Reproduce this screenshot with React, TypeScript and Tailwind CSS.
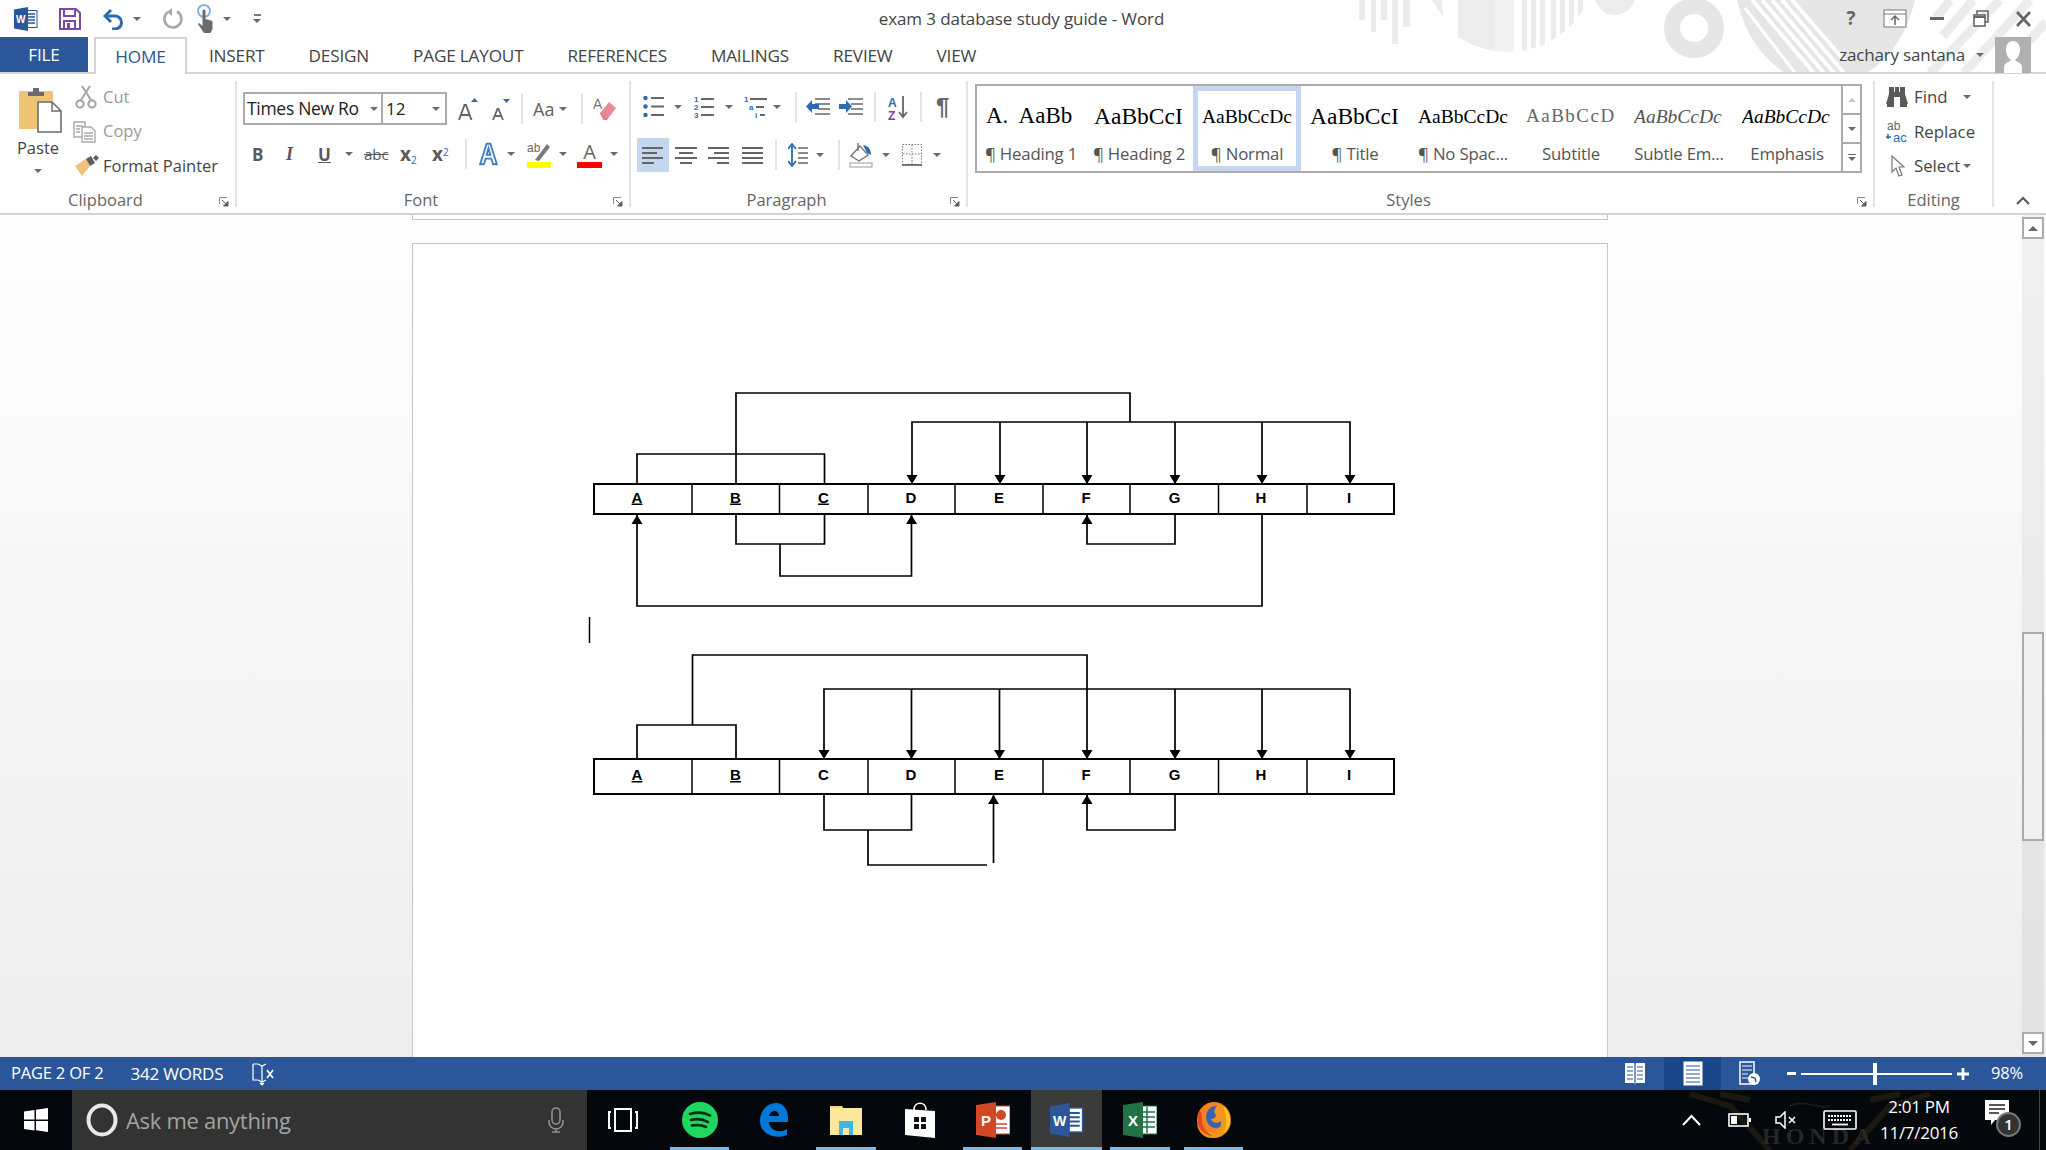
import type { ReactNode } from "react";

const Caret = ({ className = "" }: { className?: string }) => (
  <span className={`flex w-[8px] justify-center shrink-0 ${className}`}>
    <span className="block h-0 w-0 border-x-[4px] border-t-[4px] border-x-transparent border-t-[#6a6a6a]" />
  </span>
);

const Sep = ({ className = "" }: { className?: string }) => (
  <span className={`block h-[30px] w-[2px] shrink-0 bg-[#e3e3e3] ${className}`} />
);

const Launcher = ({ className = "" }: { className?: string }) => (
  <svg width="10" height="10" viewBox="0 0 10 10" className={className}>
    <path d="M.5 7V.5H8" fill="none" stroke="#8a8a8a" />
    <path d="M3 3l5 5M9 4.5V9H4.5z" fill="#5f5f5f" stroke="#5f5f5f" />
  </svg>
);

function Group({ className, label, launcher = true, children }: { className: string; label: string; launcher?: boolean; children: ReactNode }) {
  return (
    <div className={`flex h-[126px] shrink-0 flex-col border-r-2 border-[#e3e3e3] ${className}`}>
      <div className="h-[109px]">{children}</div>
      <div className={`relative flex h-[17px] justify-center text-[16.5px] leading-[20px] text-[#666] ${launcher ? "pr-[24px]" : ""}`}>
        {label}
        {launcher && <Launcher className="absolute right-[6px] top-[7px]" />}
      </div>
    </div>
  );
}

const WordGlyph = ({ size = 24 }: { size?: number }) => (
  <svg width={size} height={size} viewBox="0 0 24 24">
    <rect x="10" y="3.5" width="13" height="17" fill="#fff" stroke="#2b579a" />
    <path d="M12 7h9M12 10h9M12 13h9M12 16h9" stroke="#2b579a" strokeWidth="1.4" />
    <path d="M0 2.5 14 0v24L0 21.5z" fill="#2b579a" />
    <text x="6.8" y="16" fontSize="10" fontWeight="700" fill="#fff" textAnchor="middle" fontFamily="Liberation Sans">W</text>
  </svg>
);

function TitleArt() {
  return (
    <svg className="absolute left-0 top-0" width="2046" height="73" viewBox="0 0 2046 73">
      <defs>
        <clipPath id="blob"><circle cx="1508" cy="-36" r="88" /></clipPath>
      </defs>
      <g fill="#ececec">
        <rect x="1359" y="0" width="6" height="20" />
        <rect x="1371" y="0" width="5" height="32" />
        <rect x="1381" y="0" width="6" height="20" />
        <rect x="1392" y="0" width="6" height="44" />
        <rect x="1403" y="0" width="7" height="27" />
        <path d="M1432 0h10l1 17z" />
        <g clipPath="url(#blob)">
          <rect x="1458" y="0" width="38" height="60" />
          <rect x="1494" y="0" width="20" height="60" fill="#f2f2f2" />
          <rect x="1522" y="0" width="5" height="60" />
          <rect x="1531" y="0" width="5" height="60" />
          <rect x="1540" y="0" width="5" height="60" />
          <rect x="1551" y="0" width="5" height="60" />
          <rect x="1560" y="0" width="5" height="60" />
          <rect x="1569" y="0" width="5" height="60" />
          <rect x="1578" y="0" width="5" height="60" />
        </g>
        <circle cx="1615" cy="-5" r="20" />
        <ellipse cx="1826" cy="-30" rx="92" ry="115" fill="#e6e6e6" />
      </g>
      <circle cx="1694" cy="28" r="22" fill="none" stroke="#e6e6e6" strokeWidth="16" />
      <g stroke="#fff" strokeWidth="4">
        <path d="M1752 0l62 73M1762 0l62 73M1772 0l62 73M1782 0l62 73M1792 0l52 60" />
        <path d="M1745 8l50 65" strokeWidth="3" />
      </g>
      <g stroke="#ececec" strokeWidth="9">
        <path d="M1950 0l-14 18M1973 0l-30 36M2000 0l-70 73M2030 0l-66 73M2046 22l-46 51" />
      </g>
    </svg>
  );
}

function TitleBar() {
  return (
    <div className="relative z-10 flex h-[37px] items-center">
      <span className="ml-[14px] w-[24px]"><WordGlyph /></span>
      <svg className="ml-[21px]" width="22" height="22" viewBox="0 0 22 22">
        <path d="M1 1h16l4 4v16H1z" fill="#fff" stroke="#7b4aa6" strokeWidth="2" />
        <path d="M5 1v7h11V1M5 21v-8h11v8" fill="none" stroke="#7b4aa6" strokeWidth="2" />
        <rect x="8" y="15" width="3" height="5" fill="#7b4aa6" />
      </svg>
      <svg className="ml-[22px]" width="21" height="22" viewBox="0 0 21 22">
        <path d="M8 2 2 8l6 6" fill="none" stroke="#2b6cb0" strokeWidth="3" />
        <path d="M3 8h9a6.5 6.5 0 0 1 0 13H9" fill="none" stroke="#2b6cb0" strokeWidth="3" />
      </svg>
      <Caret className="ml-[9px]" />
      <svg className="ml-[21px]" width="22" height="22" viewBox="0 0 22 22">
        <path d="M15 3.5A8.5 8.5 0 1 1 6 4" fill="none" stroke="#a8a8a8" strokeWidth="2.6" />
        <path d="M10 0v8L5 4z" fill="#a8a8a8" />
      </svg>
      <svg className="ml-[13px]" width="19" height="30" viewBox="0 0 19 30">
        <circle cx="7" cy="7" r="6" fill="none" stroke="#7fb2de" strokeWidth="2" />
        <path d="M5.5 7a1.5 1.5 0 0 1 3 0v8l7 2v8l-2 4H7l-6-9 1-1 3.5 3z" fill="#6b6b6b" />
      </svg>
      <Caret className="ml-[7px]" />
      <span className="ml-[20px] flex w-[12px] flex-col items-center gap-[3px]">
        <span className="h-[2px] w-[7px] bg-[#7a7a7a]" />
        <Caret />
      </span>
      <span className="absolute left-[878px] w-[287px] whitespace-nowrap text-center text-[17px] tracking-[-0.1px] text-[#444]">exam 3 database study guide - Word</span>
      <div className="ml-auto flex items-center">
        <span className="w-[14px] text-center text-[19px] font-bold leading-none text-[#666]">?</span>
        <svg className="ml-[25px]" width="24" height="19" viewBox="0 0 24 19">
          <rect x="1" y="1" width="22" height="17" fill="#fff" stroke="#777" />
          <path d="M1 5h22" stroke="#777" />
          <path d="M12 16V8M8 11l4-4 4 4" fill="none" stroke="#666" strokeWidth="1.5" />
        </svg>
        <span className="ml-[23px] h-[3px] w-[14px] bg-[#666]" />
        <svg className="ml-[29px]" width="16" height="17" viewBox="0 0 16 17">
          <path d="M4 4V1h11v11h-3" fill="none" stroke="#666" strokeWidth="1.6" />
          <rect x="1" y="5" width="11" height="11" fill="#fff" stroke="#666" strokeWidth="1.6" />
          <path d="M1 7h11" stroke="#666" strokeWidth="2" />
        </svg>
        <svg className="ml-[27px] mr-[15px]" width="15" height="16" viewBox="0 0 15 16">
          <path d="M1 1l13 14M14 1 1 15" stroke="#666" strokeWidth="2.6" />
        </svg>
      </div>
    </div>
  );
}

function Tabs() {
  const tabs = ["INSERT", "DESIGN", "PAGE LAYOUT", "REFERENCES", "MAILINGS", "REVIEW", "VIEW"];
  return (
    <div className="relative z-10 flex h-[37px] items-stretch border-b-2 border-[#d4d4d4] pt-[2px] text-[17.2px] tracking-[-0.2px] text-[#444]">
      <div className="-mt-[2px] flex w-[88px] items-center justify-center bg-[#2b579a] text-white">FILE</div>
      <div className="relative z-10 ml-[6px] -mb-[2px] -mt-[2px] flex w-[93px] items-center justify-center border-x-2 border-t-2 border-[#d4d4d4] bg-white text-[#2b579a]">HOME</div>
      {tabs.map((t) => (
        <div key={t} className="flex items-center whitespace-nowrap px-[22px]">{t}</div>
      ))}
      <div className="-mt-[2px] ml-auto flex items-center text-[17px] tracking-[-0.2px] normal-case">
        <span>zachary santana</span>
        <Caret className="ml-[11px]" />
        <svg className="ml-[11px] mr-[15px]" width="36" height="36" viewBox="0 0 36 36">
          <rect width="36" height="36" fill="#b0b0b0" />
          <path d="M9 36v-6c0-4 5-5 7-7-3-2-5-6-5-10 0-6 3-9 7-9s7 3 7 9c0 4-2 8-5 10 2 2 7 3 7 7v6z" fill="#fff" />
        </svg>
      </div>
    </div>
  );
}

function Clipboard() {
  return (
    <Group className="w-[237px]" label="Clipboard">
      <div className="flex">
        <div className="flex w-[73px] flex-col items-center pl-[3px] pt-[6px]">
          <svg className="ml-[4px]" width="44" height="46" viewBox="0 0 44 46">
            <rect x="1" y="4" width="34" height="38" rx="1" fill="#f0c477" />
            <path d="M10 5h16v4H10zM15 1h6v5h-6z" fill="#6b6b6b" />
            <path d="M20 15h14l9 9v21H20z" fill="#fff" stroke="#6b6b6b" strokeWidth="1.6" />
            <path d="M34 15v9h9" fill="none" stroke="#6b6b6b" strokeWidth="1.4" />
          </svg>
          <span className="mt-[5px] text-[16.5px] leading-[20px] text-[#444]">Paste</span>
          <Caret className="mt-[11px]" />
        </div>
        <div className="-mt-[2px] flex flex-col text-[16.5px] text-[#444]">
          <div className="flex h-[34px] items-center pt-[2px] text-[#9a9a9a]">
            <svg className="ml-[2px]" width="22" height="24" viewBox="0 0 22 24">
              <g fill="none" stroke="#a9a9a9" strokeWidth="2.2">
                <circle cx="5" cy="19" r="3.6" />
                <circle cx="17" cy="19" r="3.6" />
                <path d="M6 15 15 1M16 15 7 1" />
              </g>
            </svg>
            <span className="ml-[6px]">Cut</span>
          </div>
          <div className="flex h-[35px] items-center pt-[2px] text-[#9a9a9a]">
            <svg width="24" height="22" viewBox="0 0 24 22">
              <g fill="#fff" stroke="#a9a9a9" strokeWidth="1.4">
                <path d="M1 1h11v15H1z" />
                <path d="M9 6h9l4 4v11H9z" />
                <path d="M3 5h7M3 8h4M3 11h4M11 12h9M11 15h9M11 18h9" />
              </g>
            </svg>
            <span className="ml-[6px]">Copy</span>
          </div>
          <div className="flex h-[34px] items-center pt-[2px]">
            <svg width="26" height="22" viewBox="0 0 26 22">
              <path d="M2 11 13 4l4 7-8 10z" fill="#eec27a" />
              <path d="M13 4l4 7 5-3-4-7z" fill="#5e5e5e" />
              <path d="M20 3l3-3 3 3-3 3z" fill="#5e5e5e" />
            </svg>
            <span className="ml-[4px] whitespace-nowrap">Format Painter</span>
          </div>
        </div>
      </div>
    </Group>
  );
}

const Lines = ({ kind }: { kind: "left" | "center" | "right" | "justify" }) => {
  const rows: Record<string, string> = {
    left: "M0 2h21M0 7h15M0 12h21M0 17h12",
    center: "M0 2h22M4 7h14M0 12h22M5 17h12",
    right: "M0 2h21M6 7h15M0 12h21M9 17h12",
    justify: "M0 2h21M0 7h21M0 12h21M0 17h21",
  };
  return (
    <svg width="22" height="19" viewBox="0 0 22 19">
      <path d={rows[kind]} stroke="#666" strokeWidth="1.8" />
    </svg>
  );
};

function Font() {
  return (
    <Group className="w-[394px]" label="Font">
      <div className="flex h-[33px] mt-[11px] ml-[6px] items-center">
        <div className="flex h-[33px] w-[140px] shrink-0 items-center border-2 border-[#ababab] bg-white pl-[2px] text-[17.5px] tracking-[-0.3px] text-[#222]">
          <span className="w-[123px] whitespace-nowrap">Times New Ro</span>
          <Caret />
        </div>
        <div className="-ml-[2px] flex h-[33px] w-[66px] shrink-0 items-center border-2 border-[#ababab] bg-white pl-[3px] text-[17px] text-[#222]">
          <span className="w-[46px]">12</span>
          <Caret />
        </div>
        <svg className="ml-[11px]" width="21" height="26" viewBox="0 0 21 26">
          <path d="M1 24 6.5 9H8l5.5 15M3.5 19h8" fill="none" stroke="#666" strokeWidth="1.9" />
          <path d="M13 6l3.5-4L20 6z" fill="#2b6cb0" />
        </svg>
        <svg className="ml-[12px]" width="20" height="26" viewBox="0 0 20 26">
          <path d="M2 24 6.5 13h1L12 24M4 20h6" fill="none" stroke="#666" strokeWidth="1.8" />
          <path d="M12 3l3.5 4L19 3z" fill="#2b6cb0" />
        </svg>
        <Sep className="ml-[10px]" />
        <span className="ml-[10px] whitespace-nowrap text-[18px] leading-[26px] text-[#5e5e5e]">Aa</span>
        <Caret className="ml-[5px]" />
        <Sep className="ml-[14px]" />
        <svg className="ml-[10px]" width="24" height="28" viewBox="0 0 24 28">
          <text x="0" y="14" fontSize="14" fill="#777" fontFamily="Liberation Sans">A</text>
          <path d="M7 18 16 7l7 6-9 12H10z" fill="#e98a99" />
          <path d="M7 18l7 7" stroke="#d66" />
        </svg>
      </div>
      <div className="mt-[12px] ml-[6px] flex h-[34px] items-center text-[#5a5a5a]">
        <span className="ml-[9px] w-[13px] text-[17px] font-bold leading-none">B</span>
        <span className="ml-[21px] w-[11px] font-['Liberation_Serif',serif] text-[18px] font-bold italic leading-none">I</span>
        <span className="ml-[21px] w-[14px] text-[17px] font-bold leading-none underline">U</span>
        <Caret className="ml-[13px]" />
        <span className="ml-[11px] w-[25px] text-[15px] leading-[20px] line-through">abc</span>
        <span className="ml-[11px] w-[21px] whitespace-nowrap text-[19px] font-bold leading-[24px]">x<sub className="text-[10px] text-[#2b6cb0] font-normal">2</sub></span>
        <span className="ml-[11px] w-[23px] whitespace-nowrap text-[19px] font-bold leading-[24px]">x<sup className="text-[10px] text-[#2b6cb0] font-normal">2</sup></span>
        <Sep className="ml-[10px]" />
        <svg className="ml-[11px]" width="21" height="26" viewBox="0 0 22 28">
          <path d="M2 25 9 3h4l7 22h-4l-2-6H8l-2 6zM9 15h4l-2-7z" fill="#fff" stroke="#3f7fc0" strokeWidth="2" />
        </svg>
        <Caret className="ml-[8px]" />
        <svg className="ml-[12px]" width="24" height="28" viewBox="0 0 24 28">
          <text x="0" y="12" fontSize="12" fill="#666" fontFamily="Liberation Sans">ab</text>
          <path d="M8 20 20 4l3 3-11 14z" fill="#777" />
          <rect x="0" y="22" width="24" height="6" fill="#ffff00" />
        </svg>
        <Caret className="ml-[8px]" />
        <span className="ml-[10px] flex w-[25px] flex-col items-center">
          <span className="text-[20px] leading-[21px] text-[#666]">A</span>
          <span className="h-[6px] w-[25px] bg-[#f00]" />
        </span>
        <Caret className="ml-[8px]" />
      </div>
    </Group>
  );
}

const ListLines = () => <path d="M8 3h13M8 11.5h13M8 20h13" stroke="#666" strokeWidth="1.8" />;

function Paragraph() {
  return (
    <Group className="w-[337px]" label="Paragraph">
      <div className="mt-[9px] flex h-[34px] items-center">
        <svg className="ml-[12px]" width="22" height="24" viewBox="0 0 22 24">
          <circle cx="2.5" cy="3" r="2.2" fill="#2b6cb0" />
          <circle cx="2.5" cy="11.5" r="2.2" fill="#2b6cb0" />
          <circle cx="2.5" cy="20" r="2.2" fill="#2b6cb0" />
          <ListLines />
        </svg>
        <Caret className="ml-[9px]" />
        <svg className="ml-[11px]" width="22" height="28" viewBox="0 0 22 28">
          <text x="1" y="9" fontSize="8" fontWeight="700" fill="#2b6cb0" fontFamily="Liberation Sans">1</text>
          <text x="1" y="17" fontSize="8" fontWeight="700" fill="#2b6cb0" fontFamily="Liberation Sans">2</text>
          <text x="1" y="25" fontSize="8" fontWeight="700" fill="#2b6cb0" fontFamily="Liberation Sans">3</text>
          <path d="M8 6h13M8 14h13M8 22h13" stroke="#666" strokeWidth="1.8" />
        </svg>
        <Caret className="ml-[10px]" />
        <svg className="ml-[10px]" width="24" height="28" viewBox="0 0 24 28">
          <text x="1" y="9" fontSize="8" fontWeight="700" fill="#2b6cb0" fontFamily="Liberation Sans">1</text>
          <text x="6" y="17" fontSize="8" fontWeight="700" fill="#2b6cb0" fontFamily="Liberation Sans">a</text>
          <text x="12" y="25" fontSize="8" fontWeight="700" fill="#2b6cb0" fontFamily="Liberation Sans">i</text>
          <path d="M7 6h17M13 14h8M17 22h5" stroke="#666" strokeWidth="1.8" />
        </svg>
        <Caret className="ml-[6px]" />
        <Sep className="ml-[14px]" />
        <svg className="ml-[9px]" width="24" height="20" viewBox="0 0 24 20">
          <path d="M9 2h15M9 7h15M12 12h12M9 17h15" stroke="#666" strokeWidth="1.7" />
          <path d="M0 9.5 6 3v4h7v5H6v4z" fill="#2b6cb0" />
        </svg>
        <svg className="ml-[9px]" width="24" height="20" viewBox="0 0 24 20">
          <path d="M9 2h15M12 7h12M12 12h12M9 17h15" stroke="#666" strokeWidth="1.7" />
          <path d="M13 9.5 7 3v4H0v5h7v4z" fill="#2b6cb0" />
        </svg>
        <Sep className="ml-[11px]" />
        <svg className="ml-[12px]" width="20" height="27" viewBox="0 0 20 27">
          <text x="0" y="13" fontSize="12" fontWeight="700" fill="#2b6cb0" fontFamily="Liberation Sans">A</text>
          <text x="0" y="26" fontSize="12" fontWeight="700" fill="#7b3fa8" fontFamily="Liberation Sans">Z</text>
          <path d="M15 2v21M11 18l4 5 4-5" fill="none" stroke="#666" strokeWidth="1.8" />
        </svg>
        <Sep className="ml-[12px]" />
        <span className="ml-[14px] w-[16px] font-['Liberation_Sans',sans-serif] text-[24px] font-bold leading-[28px] text-[#666]">¶</span>
      </div>
      <div className="mt-[14px] flex h-[34px] items-center">
        <span className="ml-[6px] flex h-[34px] w-[32px] items-center justify-center bg-[#c5d7f0]"><Lines kind="left" /></span>
        <span className="ml-[6px] w-[22px]"><Lines kind="center" /></span>
        <span className="ml-[11px] w-[21px]"><Lines kind="right" /></span>
        <span className="ml-[13px] w-[21px]"><Lines kind="justify" /></span>
        <Sep className="ml-[12px]" />
        <svg className="ml-[11px]" width="20" height="24" viewBox="0 0 20 24">
          <path d="M4 3v18M0 6l4-5 4 5M0 18l4 5 4-5" fill="none" stroke="#2b6cb0" strokeWidth="1.8" />
          <path d="M10 5h10M10 10h10M10 15h10M10 20h10" stroke="#666" strokeWidth="1.7" />
        </svg>
        <Caret className="ml-[8px]" />
        <Sep className="ml-[14px]" />
        <svg className="ml-[9px]" width="24" height="26" viewBox="0 0 24 26">
          <path d="M2 14 11 4l8 9-9 6z" fill="#fff" stroke="#777" strokeWidth="1.4" />
          <path d="M9 1v8" stroke="#777" strokeWidth="1.4" />
          <path d="M14 3c6 1 8 5 8 10l-4-2z" fill="#2b6cb0" />
          <rect x="1" y="21" width="22" height="4" fill="#fff" stroke="#999" />
        </svg>
        <Caret className="ml-[9px]" />
        <svg className="ml-[12px]" width="20" height="22" viewBox="0 0 20 22">
          <rect x=".5" y=".5" width="19" height="20" fill="none" stroke="#777" strokeDasharray="1.5 1.5" />
          <path d="M10 1v19M1 10h18" stroke="#777" strokeDasharray="1.5 1.5" />
          <path d="M0 21h20" stroke="#555" strokeWidth="1.5" />
        </svg>
        <Caret className="ml-[11px]" />
      </div>
    </Group>
  );
}

const styleItems: { label: string; sample: string; cls: string; active?: boolean }[] = [
  { label: "¶ Heading 1", sample: "A.  AaBb", cls: "text-[23px] text-black" },
  { label: "¶ Heading 2", sample: "AaBbCcI", cls: "text-[23.5px] text-black" },
  { label: "¶ Normal", sample: "AaBbCcDc", cls: "text-[19.5px] text-black", active: true },
  { label: "¶ Title", sample: "AaBbCcI", cls: "text-[23.5px] text-black" },
  { label: "¶ No Spac...", sample: "AaBbCcDc", cls: "text-[19.5px] text-black" },
  { label: "Subtitle", sample: "AaBbCcD", cls: "text-[19px] tracking-[1.5px] text-[#666]" },
  { label: "Subtle Em...", sample: "AaBbCcDc", cls: "text-[19.5px] italic text-[#555]" },
  { label: "Emphasis", sample: "AaBbCcDc", cls: "text-[19.5px] italic text-black" },
];

function Styles() {
  return (
    <Group className="w-[907px]" label="Styles">
      <div className="ml-[7px] mt-[3px] flex h-[89px] w-[887px] border-2 border-[#ababab]">
        <div className="flex flex-1 overflow-hidden">
          {styleItems.map((s) => (
            <div key={s.label} className={`flex h-[85px] w-[108px] shrink-0 flex-col items-center border-[5px] ${s.active ? "border-[#c5d7f0]" : "border-transparent"}`}>
              <div className={`flex h-[52px] w-[90px] items-center overflow-hidden whitespace-pre font-['Liberation_Serif',serif] ${s.cls}`}>{s.sample}</div>
              <div className="flex h-[24px] items-center whitespace-nowrap text-[16.8px] tracking-[-0.2px] text-[#555]">{s.label}</div>
            </div>
          ))}
        </div>
        <div className="flex w-[19px] flex-col border-l-2 border-[#ababab]">
          <div className="flex h-[29px] items-center justify-center border-b-2 border-[#ababab]">
            <span className="h-0 w-0 border-x-[4px] border-b-[4px] border-x-transparent border-b-[#c4c4c4]" />
          </div>
          <div className="flex h-[29px] items-center justify-center border-b-2 border-[#ababab]"><Caret /></div>
          <div className="flex flex-1 flex-col items-center justify-center gap-[2px]">
            <span className="h-[1.5px] w-[8px] bg-[#6a6a6a]" />
            <Caret />
          </div>
        </div>
      </div>
    </Group>
  );
}

function Editing() {
  return (
    <Group className="w-[119px] border-r-0" label="Editing" launcher={false}>
      <div className="-mt-[2px] flex flex-col text-[16.8px] text-[#444]">
        <div className="flex h-[34px] items-center pt-[2px]">
          <svg className="ml-[10px]" width="24" height="22" viewBox="0 0 22 22">
            <path d="M3 1h5v5h1V1h4v5h1V1h5v7l3 10H14v-7H8v7H0l3-10z" fill="#5a5a5a" />
            <rect x="1" y="16" width="7" height="5" fill="#5a5a5a" />
            <rect x="14" y="16" width="7" height="5" fill="#5a5a5a" />
          </svg>
          <span className="ml-[5px]">Find</span>
          <Caret className="ml-[16px]" />
        </div>
        <div className="flex h-[35px] items-center pt-[2px]">
          <svg className="ml-[10px]" width="24" height="24" viewBox="0 0 24 24">
            <text x="2" y="10" fontSize="12" fill="#666" fontFamily="Liberation Sans">ab</text>
            <text x="8" y="22" fontSize="13" fill="#2b6cb0" fontFamily="Liberation Sans">ac</text>
            <path d="M1 17h5M3 14v5" stroke="#2b6cb0" strokeWidth="1.5" />
          </svg>
          <span className="ml-[5px]">Replace</span>
        </div>
        <div className="flex h-[34px] items-center pt-[2px]">
          <svg className="ml-[16px]" width="14" height="22" viewBox="0 0 14 22">
            <path d="M1 1v16l4-4 3 8 3-1-3-8h5z" fill="#fff" stroke="#777" strokeWidth="1.2" />
          </svg>
          <span className="ml-[9px]">Select</span>
          <Caret className="ml-[3px]" />
        </div>
      </div>
    </Group>
  );
}

function Ribbon() {
  return (
    <div className="flex h-[141px] items-start border-b-2 border-[#d4d4d4] bg-white pt-[7px]">
      <Clipboard />
      <Font />
      <Paragraph />
      <Styles />
      <Editing />
      <svg className="ml-[22px] mt-[115px]" width="14" height="9" viewBox="0 0 14 9">
        <path d="M1 8l6-6 6 6" fill="none" stroke="#555" strokeWidth="2" />
      </svg>
    </div>
  );
}

type Cell = { label: string; x: number };

const cols: Cell[] = [
  { label: "A", x: 637 },
  { label: "B", x: 735.5 },
  { label: "C", x: 823.5 },
  { label: "D", x: 911 },
  { label: "E", x: 999 },
  { label: "F", x: 1086 },
  { label: "G", x: 1174.5 },
  { label: "H", x: 1261 },
  { label: "I", x: 1349 },
];
const dividers = [692, 779.5, 868, 955, 1043, 1130, 1218.5, 1307];

const Down = ({ x, y }: { x: number; y: number }) => <polygon points={`${x - 5.5},${y - 9} ${x + 5.5},${y - 9} ${x},${y}`} fill="#000" />;
const Up = ({ x, y }: { x: number; y: number }) => <polygon points={`${x - 5.5},${y + 9} ${x + 5.5},${y + 9} ${x},${y}`} fill="#000" />;

function Row({ top, bottom, underlined }: { top: number; bottom: number; underlined: string }) {
  return (
    <g>
      <rect x="594" y={top} width="800" height={bottom - top} fill="#fff" stroke="#000" strokeWidth="2" />
      {dividers.map((d) => (
        <path key={d} d={`M${d} ${top}V${bottom}`} stroke="#000" strokeWidth="1.5" />
      ))}
      {cols.map((c) => (
        <text key={c.label} x={c.x} y={(top + bottom) / 2 + 3.5} textAnchor="middle" fontSize="15" fontWeight="700" fontFamily="Liberation Sans" fill="#000" textDecoration={underlined.includes(c.label) ? "underline" : "none"}>
          {c.label}
        </text>
      ))}
    </g>
  );
}

function Diagram() {
  const stroke = { fill: "none", stroke: "#000", strokeWidth: 1.7 };
  return (
    <svg width="1194" height="813" viewBox="413 244 1194 813">
      <path {...stroke} d="M736 484V393H1130V422M912 484V422H1350V484M1000 484V422M1087 484V422M1175 484V422M1262 484V422" />
      <path {...stroke} d="M637 484V454H824.5V484" />
      <path {...stroke} d="M736 514V544H824.5V514M780 544V576H911.5V514" />
      <path {...stroke} d="M1175 514V544H1087V514" />
      <path {...stroke} d="M1262 514V606H637V514" />
      {[912, 1000, 1087, 1175, 1262, 1350].map((x) => (
        <Down key={x} x={x} y={484} />
      ))}
      <Row top={484} bottom={514} underlined="ABC" />
      {[637, 911.5, 1087].map((x) => (
        <Up key={x} x={x} y={515} />
      ))}
      <path d="M589.5 617V643" stroke="#000" strokeWidth="1.5" />

      <path {...stroke} d="M692.5 725V655H1087V759M824 759V689H1350V759M911.5 759V689M999.5 759V689M1175 759V689M1262 759V689" />
      <path {...stroke} d="M637 759V725H736V759" />
      <path {...stroke} d="M824 794V830H911.5V794M868 830V865H987" />
      <path {...stroke} d="M993.5 863V794" />
      <path {...stroke} d="M1175 794V830H1087V794" />
      <Row top={759} bottom={794} underlined="AB" />
      {[824, 911.5, 999.5, 1087, 1175, 1262, 1350].map((x) => (
        <Down key={x} x={x} y={759} />
      ))}
      {[993.5, 1087].map((x) => (
        <Up key={x} x={x} y={795} />
      ))}
    </svg>
  );
}

function Scrollbar() {
  return (
    <div className="mr-[2px] flex w-[22px] flex-col bg-gradient-to-b from-[#f1f1f1] to-[#e2e2e2] pt-[2px] pb-[3px]">
      <div className="flex h-[22px] items-center justify-center border-2 border-[#ababab] bg-white">
        <span className="h-0 w-0 border-x-[5px] border-b-[5px] border-x-transparent border-b-[#666]" />
      </div>
      <div className="mt-[393px] h-[209px] border-2 border-[#ababab] bg-[#f0f0f0]" />
      <div className="mt-auto flex h-[22px] items-center justify-center border-2 border-[#ababab] bg-white">
        <span className="h-0 w-0 border-x-[5px] border-t-[5px] border-x-transparent border-t-[#666]" />
      </div>
    </div>
  );
}

function Document() {
  return (
    <div className="flex h-[842px] bg-gradient-to-b from-[#fefefe] to-[#eeeeee]">
      <div className="mr-[2px] flex flex-1 flex-col items-center overflow-hidden">
        <div className="h-[5px] w-[1196px] shrink-0 border-x border-b border-[#c6c6c6] bg-white" />
        <div className="mt-[23px] h-[814px] w-[1196px] shrink-0 border-x border-t border-[#c6c6c6] bg-white">
          <Diagram />
        </div>
      </div>
      <Scrollbar />
    </div>
  );
}

function StatusBar() {
  return (
    <div className="flex h-[33px] items-center bg-[#2b579a] text-[16.5px] tracking-[-0.2px] text-white">
      <span className="ml-[11px]">PAGE 2 OF 2</span>
      <span className="ml-[27px] text-[17px]">342 WORDS</span>
      <svg className="ml-[29px]" width="22" height="24" viewBox="0 0 22 24">
        <path d="M1 2h5l4 2 4-2M1 2v16h5l4 2 4-2M10 4v19M8 21l2 2 2-2" fill="none" stroke="#fff" strokeWidth="1.2" />
        <path d="M15 8l6 8M21 8l-6 8" stroke="#fff" strokeWidth="1.6" />
      </svg>
      <div className="ml-auto flex h-full items-center">
        <svg width="22" height="26" viewBox="0 0 22 26">
          <path d="M1 2h9l1 1 1-1h9v20h-9l-1 2-1-2H1z" fill="#fff" />
          <path d="M11 2v22M3 6h6M3 10h6M3 14h6M3 18h6M13 6h6M13 10h6M13 14h6M13 18h6" stroke="#2b579a" strokeWidth="1.2" />
        </svg>
        <div className="ml-[18px] flex h-full w-[57px] items-center justify-center bg-[#19478a]">
          <svg width="20" height="25" viewBox="0 0 20 25">
            <rect x=".5" y=".5" width="19" height="24" fill="#fff" />
            <path d="M3 5h14M3 9h14M3 13h14M3 17h14M3 21h14" stroke="#2b579a" strokeWidth="1.2" />
          </svg>
        </div>
        <svg className="ml-[18px]" width="22" height="26" viewBox="0 0 22 26">
          <path d="M1 1h14v22H1z" fill="#2b579a" stroke="#fff" strokeWidth="1.5" />
          <path d="M3 5h10M3 9h10M3 13h6M3 17h6" stroke="#fff" strokeWidth="1.2" />
          <circle cx="15" cy="18" r="6" fill="#fff" />
          <path d="M12 16l4 1 1 4" fill="none" stroke="#2b579a" strokeWidth="1.5" />
        </svg>
        <span className="ml-[26px] h-[3px] w-[9px] bg-white" />
        <div className="relative ml-[5px] h-[2px] w-[151px] bg-white">
          <span className="absolute left-[72px] top-[-10px] h-[22px] w-[4px] bg-white" />
        </div>
        <svg className="ml-[5px]" width="12" height="14" viewBox="0 0 12 14">
          <path d="M0 7h12M6 1v12" stroke="#fff" strokeWidth="2.8" />
        </svg>
        <span className="ml-[22px] mr-[22px] w-[33px] whitespace-nowrap">98%</span>
      </div>
    </div>
  );
}

function AppSlot({ className, active, bar = true, children }: { className: string; active?: boolean; bar?: boolean; children: ReactNode }) {
  return (
    <div className={`relative flex h-full shrink-0 items-center justify-center ${active ? "bg-[#3a3a3a]" : ""} ${className}`}>
      {children}
      {bar && <span className="absolute bottom-0 left-0 right-0 h-[3px] bg-[#76b9ed]" />}
    </div>
  );
}

function Taskbar() {
  return (
    <div className="relative flex h-[60px] items-center overflow-hidden bg-[#04070b] text-white">
      <svg className="absolute left-[1660px] top-0" width="300" height="60" viewBox="0 0 300 60">
        <g fill="none" stroke="#1b1812" strokeWidth="6">
          <path d="M30 4 70 16 110 60M270 4 230 16 190 60M60 4 90 10M240 4 210 10" />
          <path d="M130 16c15-8 25 4 40 0" strokeWidth="2" />
        </g>
      </svg>
      <span className="absolute left-[1762px] top-[33px] font-['Liberation_Serif',serif] text-[24px] font-bold leading-[27px] tracking-[5px] text-[#262626]">HONDA</span>
      <div className="flex w-[72px] justify-center">
        <svg width="24" height="24" viewBox="0 0 24 24">
          <path d="M0 3.5 10.5 2v9.5H0zM12 1.8 24 0v11.5H12zM0 13h10.5v9.5L0 21zM12 13h12v11l-12-1.8z" fill="#fff" />
        </svg>
      </div>
      <div className="flex h-full w-[515px] items-center bg-[#333] text-[#a3a3a3]">
        <svg className="ml-[14px]" width="32" height="34" viewBox="0 0 32 34">
          <ellipse cx="16" cy="17" rx="13.5" ry="14.5" fill="none" stroke="#e8e8e8" strokeWidth="4" />
        </svg>
        <span className="ml-[8px] text-[22px] tracking-[-0.3px]">Ask me anything</span>
        <svg className="ml-auto mr-[23px]" width="16" height="26" viewBox="0 0 16 26">
          <rect x="4" y="1" width="8" height="16" rx="4" fill="none" stroke="#909090" strokeWidth="1.6" />
          <path d="M1 13v2a7 7 0 0 0 14 0v-2M8 22v3M4 25h8" fill="none" stroke="#909090" strokeWidth="1.6" />
        </svg>
      </div>
      <svg className="ml-[21px]" width="30" height="24" viewBox="0 0 30 24">
        <rect x="7" y="1" width="16" height="22" fill="none" stroke="#fff" strokeWidth="2" />
        <path d="M3 4H1v16h2M27 4h2v16h-2" fill="none" stroke="#fff" strokeWidth="2" />
      </svg>
      <AppSlot className="ml-[32px] w-[59px]">
        <svg width="36" height="36" viewBox="0 0 36 36">
          <circle cx="18" cy="18" r="18" fill="#1ed760" />
          <path d="M8 12c7-2 14-2 20 1.5M9 18c6-1.5 12-1 17 2M10 23.5c5-1 10-.5 14 1.5" fill="none" stroke="#0a2a14" strokeWidth="2.6" strokeLinecap="round" />
        </svg>
      </AppSlot>
      <AppSlot className="ml-[15px] w-[59px]" bar={false}>
        <svg width="30" height="34" viewBox="0 0 30 34">
          <path d="M29 19H10c0 8 10 12 18 7v6c-12 5-27-1-27-14C1 8 8 0 17 0c8 0 13 7 12 19zM20 13c0-6-8-7-10 0z" fill="#0078d7" />
        </svg>
      </AppSlot>
      <AppSlot className="ml-[13px] w-[60px]">
        <svg width="32" height="30" viewBox="0 0 32 30">
          <path d="M0 4V1h12l2 3z" fill="#f7d774" />
          <rect y="3" width="32" height="27" fill="#fde79a" />
          <rect x="9" y="16" width="14" height="14" fill="#3fb6ea" />
          <rect x="13" y="23" width="6" height="7" fill="#fde79a" />
        </svg>
      </AppSlot>
      <AppSlot className="ml-[14px] w-[59px]" bar={false}>
        <svg width="32" height="36" viewBox="0 0 32 36">
          <path d="M10 8c0-9 12-9 12 0" fill="none" stroke="#fff" strokeWidth="1.6" />
          <path d="M1 7 31 9v27L1 33z" fill="#fff" />
          <path d="M10 15h5v5h-5zM17 15h5v5h-5zM10 22h5v5h-5zM17 22h5v5h-5z" fill="#111" />
        </svg>
      </AppSlot>
      <AppSlot className="ml-[14px] w-[59px]">
        <svg width="34" height="36" viewBox="0 0 34 36">
          <rect x="14" y="4" width="20" height="28" fill="#fff" stroke="#d24726" />
          <circle cx="25" cy="13" r="5" fill="#d24726" />
          <path d="M18 22h13M18 26h13" stroke="#d24726" strokeWidth="1.5" />
          <path d="M0 3 20 0v36L0 33z" fill="#d24726" />
          <text x="10" y="24" textAnchor="middle" fontSize="15" fontWeight="700" fill="#fff" fontFamily="Liberation Sans">P</text>
        </svg>
      </AppSlot>
      <AppSlot className="ml-[9px] w-[71px]" active>
        <WordGlyph size={34} />
      </AppSlot>
      <AppSlot className="ml-[8px] w-[60px]">
        <svg width="34" height="36" viewBox="0 0 34 36">
          <rect x="14" y="4" width="20" height="28" fill="#fff" stroke="#217346" />
          <path d="M16 10h16M16 15h16M16 20h16M16 25h16M24 5v26" stroke="#217346" strokeWidth="1.5" />
          <path d="M0 3 20 0v36L0 33z" fill="#217346" />
          <text x="10" y="24" textAnchor="middle" fontSize="15" fontWeight="700" fill="#fff" fontFamily="Liberation Sans">X</text>
        </svg>
      </AppSlot>
      <AppSlot className="ml-[14px] w-[59px]">
        <svg width="34" height="36" viewBox="0 0 34 36">
          <ellipse cx="17" cy="18" rx="17" ry="18" fill="#f58220" />
          <ellipse cx="19" cy="15" rx="10" ry="11" fill="#3a62b4" />
          <path d="M22 2c8 3 12 10 11 18-1 9-9 16-18 16C7 36 1 30 0 22c3 6 9 9 15 8 6-1 10-6 9-11-3 3-9 2-10-2 3 0 5-2 5-4-2-2-3-6 3-11z" fill="#f2951e" />
          <path d="M26 4c5 4 8 10 7 17-1 4-3 8-6 10 3-8 3-18-1-27z" fill="#ffc61e" />
          <path d="M3 8c-3 6-3 14 0 19 3 4 8 7 13 7-6-3-10-8-11-14 0-4 0-8-2-12z" fill="#e8491d" />
        </svg>
      </AppSlot>
      <div className="relative ml-auto flex h-full items-center">
        <svg width="19" height="12" viewBox="0 0 19 12">
          <path d="M1 11 9.5 2 18 11" fill="none" stroke="#fff" strokeWidth="2" />
        </svg>
        <svg className="ml-[27px]" width="23" height="14" viewBox="0 0 23 14">
          <rect x="1" y="1" width="19" height="12" fill="none" stroke="#fff" strokeWidth="1.6" />
          <rect x="3" y="3" width="6" height="8" fill="#fff" />
          <rect x="21" y="5" width="2" height="4" fill="#fff" />
        </svg>
        <svg className="ml-[24px]" width="21" height="18" viewBox="0 0 21 18">
          <path d="M1 6h4l5-5v16l-5-5H1z" fill="none" stroke="#fff" strokeWidth="1.5" />
          <path d="M14 6l6 6M20 6l-6 6" stroke="#fff" strokeWidth="1.5" />
        </svg>
        <svg className="ml-[27px]" width="34" height="20" viewBox="0 0 34 20">
          <rect x="1" y="1" width="32" height="18" rx="1" fill="none" stroke="#fff" strokeWidth="1.6" />
          <path d="M5 6h24M5 10h24" stroke="#fff" strokeWidth="1.8" strokeDasharray="2 1" />
          <path d="M9 14.5h16" stroke="#fff" strokeWidth="1.8" />
        </svg>
        <div className="ml-[24px] flex w-[76px] flex-col items-center text-[17px] leading-[26px] tracking-[-0.3px]">
          <span>2:01 PM</span>
          <span className="whitespace-nowrap">11/7/2016</span>
        </div>
        <div className="relative ml-[28px] h-[46px] w-[40px]">
          <svg className="absolute left-0 top-[3px]" width="24" height="26" viewBox="0 0 24 26">
            <path d="M0 0h24v20H10l-4 5v-5H0z" fill="#fff" />
            <path d="M4 5h16M4 9h16M4 13h10" stroke="#222" strokeWidth="1.5" />
          </svg>
          <span className="absolute left-[11px] top-[15px] flex h-[25px] w-[25px] items-center justify-center rounded-full border-2 border-[#777] bg-[#333] text-[15px] font-semibold text-white">1</span>
        </div>
        <span className="ml-[14px] h-full w-[7px] border-l border-[#444]" />
      </div>
    </div>
  );
}

export default function App() {
  return (
    <div className="h-[1150px] w-[2046px] overflow-hidden bg-white font-['Open_Sans',sans-serif]">
      <div className="relative">
        <TitleArt />
        <TitleBar />
        <Tabs />
      </div>
      <Ribbon />
      <Document />
      <StatusBar />
      <Taskbar />
    </div>
  );
}
